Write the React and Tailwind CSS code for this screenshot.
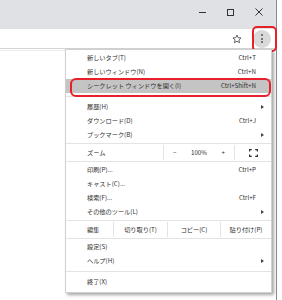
import React from "react";

const font = { fontFamily: '"Noto Sans CJK JP", "Noto Sans", sans-serif' };

const Arrow = () => (
  <span className="w-0 h-0 border-y-[2.5px] border-y-transparent border-l-[3px] border-l-[#444]" />
);

const Item = ({ label, shortcut, arrow }) => (
  <div className="flex items-center h-[14px] pl-[21px] pr-[15px] text-[#2e2e2e]">
    <span className="flex-1">{label}</span>
    {shortcut && <span>{shortcut}</span>}
    {arrow && (
      <span className="mr-[-8px] flex items-center">
        <Arrow />
      </span>
    )}
  </div>
);

const Sep = ({ top = "my-[2px]" }) => <div className={`h-px bg-[#e3e3e3] ${top}`} />;

const ChromeMenu = () => (
  <div
    className="absolute left-[65px] top-[49px] w-[207px] h-[244px] bg-white border border-[#d0d0d0] shadow-[2px_2px_3px_rgba(0,0,0,0.35)] pt-[1px] text-[6.2px] leading-[14px]"
    style={font}
  >
    <Item label="新しいタブ(T)" shortcut="Ctrl+T" />
    <Item label="新しいウィンドウ(N)" shortcut="Ctrl+N" />
    <div className="bg-[#c4c4c4]">
      <Item label="シークレット ウィンドウを開く(I)" shortcut="Ctrl+Shift+N" />
    </div>
    <Sep top="mt-[3px] mb-[3px]" />
    <Item label="履歴(H)" arrow />
    <Item label="ダウンロード(D)" shortcut="Ctrl+J" />
    <Item label="ブックマーク(B)" arrow />
    <Sep top="my-[1px]" />
    <div className="flex h-[15px] items-center text-[#2e2e2e]">
      <span className="pl-[21px] w-[97px]">ズーム</span>
      <div className="w-px h-full bg-[#e3e3e3]" />
      <div className="w-[70px] flex items-center justify-between px-[9px]">
        <span>−</span>
        <span>100%</span>
        <span>+</span>
      </div>
      <div className="w-px h-full bg-[#e3e3e3]" />
      <div className="flex-1 flex justify-center items-center">
        <svg width="9" height="8" viewBox="0 0 9 8" fill="none" stroke="#333" strokeWidth="1.2">
          <path d="M0.6 2.6V0.6H2.8M6.2 0.6H8.4V2.6M8.4 5.4V7.4H6.2M2.8 7.4H0.6V5.4" />
        </svg>
      </div>
    </div>
    <Sep top="my-[1px]" />
    <Item label="印刷(P)..." shortcut="Ctrl+P" />
    <Item label="キャスト(C)..." />
    <Item label="検索(F)..." shortcut="Ctrl+F" />
    <Item label="その他のツール(L)" arrow />
    <Sep top="my-[1px]" />
    <div className="flex h-[15px] items-center text-[#2e2e2e]">
      <span className="pl-[21px] w-[47px]">編集</span>
      <div className="w-px h-full bg-[#e3e3e3]" />
      <span className="w-[53px] text-center">切り取り(T)</span>
      <div className="w-px h-full bg-[#e3e3e3]" />
      <span className="w-[52px] text-center">コピー(C)</span>
      <div className="w-px h-full bg-[#e3e3e3]" />
      <span className="flex-1 text-center">貼り付け(P)</span>
    </div>
    <Sep top="my-[1px]" />
    <Item label="設定(S)" />
    <Item label="ヘルプ(H)" arrow />
    <Sep top="my-[3px]" />
    <Item label="終了(X)" />

    {/* red highlight around incognito */}
    <div className="absolute left-[4px] top-[28px] w-[201px] h-[19px] border-2 border-[#e8202a] rounded-[6px]" />
  </div>
);

export default function App() {
  return (
    <div className="w-[282px] h-[300px] bg-white relative overflow-hidden">
      <div className="w-[277px] h-full border-r border-[#8c8c8c] flex flex-col relative">
        {/* title bar */}
        <div className="h-[29px] bg-[#dfe1e5] flex items-start justify-end">
          <div className="w-[29px] h-[24px] flex items-center justify-center">
            <div className="w-[7px] h-px bg-[#333]" />
          </div>
          <div className="w-[27px] h-[24px] flex items-center justify-center">
            <div className="w-[7px] h-[7px] border border-[#333]" />
          </div>
          <div className="w-[30px] h-[24px] flex items-center justify-center mr-[2px]">
            <svg width="8" height="8" viewBox="0 0 8 8" stroke="#333" strokeWidth="1">
              <path d="M0.5 0.5L7.5 7.5M7.5 0.5L0.5 7.5" />
            </svg>
          </div>
        </div>
        {/* toolbar */}
        <div className="h-[20px] bg-white flex items-center justify-end border-b border-[#d4d4d4]">
          <svg width="10" height="10" viewBox="0 0 24 24" fill="none" stroke="#555" strokeWidth="2.2" className="mr-[11px]">
            <path d="M12 2.5l2.9 6.3 6.8.7-5.1 4.6 1.5 6.8L12 17.4l-6.1 3.5 1.5-6.8-5.1-4.6 6.8-.7z" />
          </svg>
          <div className="w-[18px] h-[18px] rounded-full bg-[#d9d9d9] flex flex-col items-center justify-center gap-[1.5px] mr-[5px]">
            <span className="w-[2px] h-[2px] rounded-full bg-[#555]" />
            <span className="w-[2px] h-[2px] rounded-full bg-[#555]" />
            <span className="w-[2px] h-[2px] rounded-full bg-[#555]" />
          </div>
        </div>
        <div className="h-px bg-[#ececec] mt-px" />
        <div className="flex-1 bg-white" />

        {/* red outline around menu button */}
        <div className="absolute left-[252px] top-[26px] w-[25px] h-[26px] border-2 border-[#e8202a] rounded-[5px]" />

        <ChromeMenu />
      </div>
    </div>
  );
}
